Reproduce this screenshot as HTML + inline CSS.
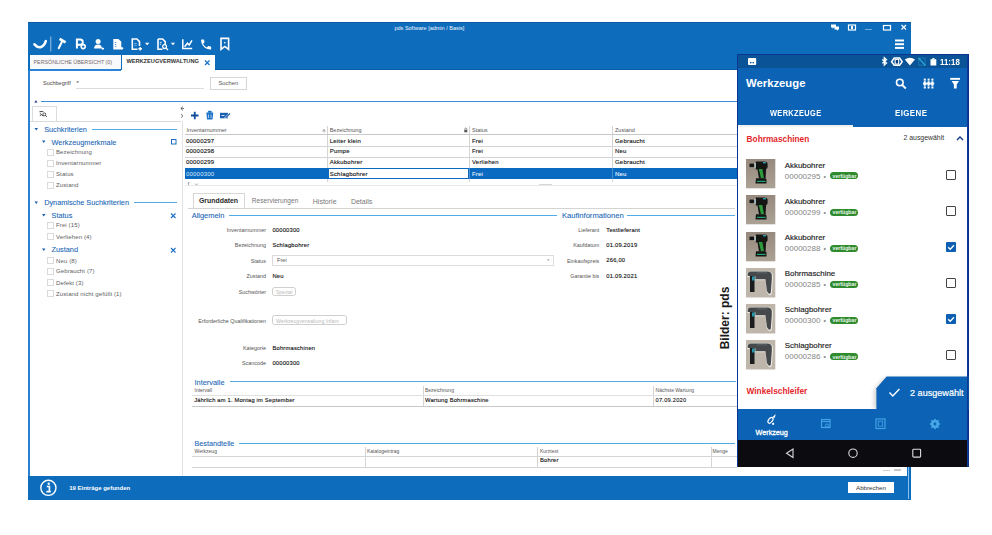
<!DOCTYPE html>
<html><head><meta charset="utf-8">
<style>
*{margin:0;padding:0;box-sizing:border-box}
html,body{width:992px;height:535px;overflow:hidden;background:#fff;font-family:"Liberation Sans",sans-serif;position:relative}
.a{position:absolute}
.t{position:absolute;white-space:nowrap;line-height:1}
.sec{position:absolute;color:#1766b6;line-height:1;white-space:nowrap;-webkit-text-stroke:0.08px #1766b6}
.lbl{position:absolute;color:#555;font-size:5.4px;line-height:1;white-space:nowrap;text-align:right}
.val{position:absolute;color:#111;font-size:5.8px;font-weight:normal;-webkit-text-stroke-width:0.12px;letter-spacing:0.2px;line-height:1;white-space:nowrap}
.hl{position:absolute;height:1px;background:#d4d4d4}
.vl{position:absolute;width:1px;background:#d4d4d4}
.bl{position:absolute;height:2px;background:#50abe6}
.cb{position:absolute;width:7px;height:7px;border:1px solid #dadada;background:#fff}
.si{position:absolute;color:#5e5e5e;font-size:6px;line-height:1;white-space:nowrap;letter-spacing:0.12px}
.th{position:absolute;color:#555;font-size:5.5px;line-height:1;white-space:nowrap}
.td{position:absolute;color:#111;font-size:6px;font-weight:normal;-webkit-text-stroke-width:0.12px;letter-spacing:0.2px;line-height:1;white-space:nowrap}
svg{position:absolute;overflow:visible}
</style></head><body>

<!-- ============ DESKTOP WINDOW ============ -->
<div class="a" style="left:28px;top:22px;width:883px;height:477.6px;background:#fff;border-left:2px solid #2a80d2;border-right:4.7px solid #0d6cbc"></div>

<div class="a" style="left:28px;top:22px;width:883px;height:48px;background:#0d6cbc;border-top:1px solid #0a5aa6"></div>
<div class="t" style="left:394.5px;top:25.6px;font-size:5.5px;color:#f4f8fc">pds Software [admin / Basis]</div>

<!-- window controls -->
<svg style="left:0;top:0" width="992" height="60" viewBox="0 0 992 60">
 <g fill="none" stroke="#fff" stroke-width="1.2">
  <rect x="848.5" y="25" width="7" height="5"/>
  <rect x="883.5" y="25.5" width="7" height="4.5"/>
  <path d="M901.5 25 L906 29.5 M906 25 L901.5 29.5"/>
 </g>
 <path d="M831 24.5h5v3h-2l-1.5 1.2v-1.2h-1.5z M834.5 26.5h4.5v3h-1.2v1.2l-1.5-1.2h-1.8z" fill="#fff"/>
 <rect x="851" y="26" width="2" height="3" fill="#fff"/>
 <rect x="865" y="29" width="7" height="0.8" fill="#8fbce6"/>
 <!-- hamburger -->
 <rect x="895" y="39.5" width="9" height="2" fill="#fff"/>
 <rect x="895" y="43.2" width="9" height="2" fill="#fff"/>
 <rect x="895" y="46.9" width="9" height="2" fill="#fff"/>
</svg>

<!-- toolbar icons -->
<svg style="left:0;top:0" width="240" height="60" viewBox="0 0 240 60">
 <!-- swoosh -->
 <path d="M34.5 44.3 Q37.5 47.8 40.5 47.2 Q44.2 46.2 45.8 41.2" fill="none" stroke="#fff" stroke-width="2.6" stroke-linecap="round"/>
 <rect x="50.3" y="36.5" width="1" height="15" fill="#9cc4ea"/>
 <!-- hammer -->
 <path d="M58.7 48.2 L62.2 41.2" fill="none" stroke="#fff" stroke-width="2" stroke-linecap="round"/>
 <path d="M59.6 38.9 L65.6 42.4" fill="none" stroke="#fff" stroke-width="2.6" stroke-linecap="butt"/>
 <!-- P with gear -->
 <path d="M76.9 48.4 V39.6 h3.3 a2.6 2.6 0 0 1 0 5.2 h-2.4" fill="none" stroke="#fff" stroke-width="2"/>
 <rect x="78.4" y="41" width="0.9" height="0.9" fill="#0d6cbc"/>
 <circle cx="83.2" cy="46.6" r="2" fill="none" stroke="#fff" stroke-width="1.6"/>
 <!-- person plus -->
 <circle cx="98.1" cy="41.6" r="2.5" fill="#fff"/>
 <path d="M94 48.4 q0.3-3.8 4.1-3.8 q3.6 0 3.9 3.8z" fill="#fff"/>
 <path d="M101.6 48.6h2.4 M102.8 47.4v2.4" stroke="#fff" stroke-width="1.1"/>
 <!-- doc -->
 <path d="M113.3 39h5.2l2.8 2.8v7.6h-8z" fill="#fff"/>
 <path d="M114.8 42.5h1.5 M114.8 44.5h1.5 M114.8 46.5h1.5" stroke="#4a8ad0" stroke-width="0.9"/>
 <path d="M120.5 48.3h2.8 M121.9 46.9v2.8" stroke="#fff" stroke-width="1.3"/>
 <!-- doc plus dropdown -->
 <path d="M137.5 49.3h-5.2v-10.3h4.6l2.6 2.6v4.3" fill="none" stroke="#fff" stroke-width="1.6"/>
 <path d="M134.3 43.5h2.5 M134.3 45.3h2.5" stroke="#8bb9e6" stroke-width="0.9"/>
 <path d="M138.4 48.8h3.6 M140.2 47v3.6" stroke="#fff" stroke-width="1.4"/>
 <path d="M145 42.8h4.3l-2.15 2.4z" fill="#fff"/>
 <!-- doc search dropdown -->
 <path d="M158 39h4.6l2.6 2.6v4 M162.5 49.3h-4.5v-10.3" fill="none" stroke="#fff" stroke-width="1.6"/>
 <path d="M159.8 42.3h1.8 M159.8 44.2h1.5" stroke="#fff" stroke-width="0.9"/>
 <circle cx="164.6" cy="46.6" r="1.9" fill="#0d6cbc" stroke="#fff" stroke-width="1.3"/>
 <path d="M166 48l2 2" stroke="#fff" stroke-width="1.5"/>
 <path d="M170.8 42.8h4.3l-2.15 2.4z" fill="#fff"/>
 <!-- chart -->
 <path d="M182.8 39.2v9.3h9.4" fill="none" stroke="#fff" stroke-width="1.5"/>
 <path d="M184.6 46.8 l2.8-3.6 l1.8 1.8 l2.8-4.6" fill="none" stroke="#fff" stroke-width="1.5"/>
 <!-- phone -->
 <path transform="translate(199.4 37.7) scale(0.56)" d="M6.62 10.79c1.44 2.83 3.76 5.14 6.59 6.590l2.2-2.2c.27-.27.67-.36 1.02-.24 1.12.37 2.33.57 3.57.57.55 0 1 .45 1 1V20c0 .55-.45 1-1 1-9.390 0-17-7.61-17-17 0-.55.45-1 1-1h3.5c.55 0 1 .45 1 1 0 1.25.2 2.45.57 3.57.11.35.03.74-.25 1.02l-2.2 2.2z" fill="#fff"/>
 <!-- bookmark -->
 <path d="M221 38.4h7.6v11l-3.8-3l-3.8 3z" fill="none" stroke="#fff" stroke-width="1.6"/>
 <path d="M224.8 41.8 l1 1 l-1 1 l-1-1z" fill="#fff"/>
</svg>

<!-- tabs -->
<div class="a" style="left:215px;top:69px;width:696px;height:1px;background:#0a5aa6"></div>
<div class="a" style="left:30px;top:55px;width:91px;height:16px;background:#f7f9fc;border-bottom:2px solid #2a83d6"></div>
<div class="t" style="left:33.5px;top:59.5px;font-size:5.35px;color:#7a6a6a">PERSÖNLICHE ÜBERSICHT (0)</div>
<div class="a" style="left:122px;top:55px;width:93px;height:15px;background:#fff"></div>
<div class="t" style="left:126.4px;top:59.3px;font-size:5.65px;font-weight:bold;color:#333">WERKZEUGVERWALTUNG</div>
<svg style="left:0;top:0" width="230" height="80"><path d="M205 60.5 l4.5 4.5 M209.5 60.5 l-4.5 4.5" stroke="#1f78c8" stroke-width="1.4"/></svg>

<!-- search row -->
<div class="t" style="left:43px;top:80.5px;font-size:5.5px;color:#4a4444">Suchbegriff</div>
<div class="t" style="left:76.5px;top:79.5px;font-size:6px;color:#333">*</div>
<div class="hl" style="left:76px;top:88px;width:128px;background:#dcdcdc"></div>
<div class="a" style="left:210px;top:77px;width:36.5px;height:12.5px;border:1px solid #d6d6d6;background:#fff"></div>
<div class="t" style="left:218.5px;top:80.5px;font-size:5.8px;color:#555">Suchen</div>

<!-- separator -->
<div class="bl" style="left:41px;top:100.5px;width:868px;height:1.6px;background:#3f90dc"></div>
<svg style="left:0;top:0" width="60" height="110"><path d="M34.3 102.6 h3.2 l-1.6 -2.4z" fill="#0f2f80"/></svg>

<!-- ============ SIDEBAR ============ -->
<div class="a" style="left:32px;top:106px;width:25px;height:16px;border:1px solid #dcdcdc;border-bottom:none;background:#fff"></div>
<div class="hl" style="left:30px;top:121px;width:151px;background:#dadada"></div>
<svg style="left:0;top:0" width="200" height="130">
 <path d="M39.5 111.6 h3.8 M39.8 113.3 l3.5 2.8" stroke="#333" stroke-width="0.9" fill="none"/>
 <circle cx="40.3" cy="115.5" r="0.6" fill="#444"/>
 <circle cx="44.3" cy="114.3" r="1.4" fill="none" stroke="#333" stroke-width="0.8"/>
 <path d="M45.3 115.3 l1.5 1.5" stroke="#333" stroke-width="1"/>
 <path d="M183 106.5 l-2.2 2 l2.2 2 M181 108.5 h3" stroke="#666" stroke-width="0.9" fill="none"/>
 <path d="M181 114 l2 1.8 l-2 1.8" stroke="#666" stroke-width="0.9" fill="none"/>
</svg>

<!-- Suchkriterien -->
<svg style="left:0;top:0" width="200" height="300">
 <g fill="#1b5fae">
  <path d="M34.5 128 h3.5 l-1.75 2.5z"/>
  <path d="M42 140.5 h3.5 l-1.75 2.5z"/>
  <path d="M34.5 201.5 h3.5 l-1.75 2.5z"/>
  <path d="M42 214 h3.5 l-1.75 2.5z"/>
  <path d="M42 248.5 h3.5 l-1.75 2.5z"/>
 </g>
 <rect x="171.5" y="139.5" width="4.5" height="4.5" fill="none" stroke="#1b6fc2" stroke-width="1"/>
 <path d="M171 213.5 l4.5 4.5 M175.5 213.5 l-4.5 4.5 M171 248 l4.5 4.5 M175.5 248 l-4.5 4.5" stroke="#1b6fc2" stroke-width="1.1"/>
</svg>
<div class="sec" style="left:44.2px;top:125.8px;font-size:7.3px">Suchkriterien</div>
<div class="bl" style="left:92px;top:128.8px;width:85px;height:1.2px"></div>
<div class="sec" style="left:51.6px;top:138.5px;font-size:7.3px">Werkzeugmerkmale</div>
<div class="cb" style="left:47px;top:149px"></div><div class="si" style="left:56px;top:149.2px">Bezeichnung</div>
<div class="cb" style="left:47px;top:160px"></div><div class="si" style="left:56px;top:160.2px">Inventarnummer</div>
<div class="cb" style="left:47px;top:171px"></div><div class="si" style="left:56px;top:171.2px">Status</div>
<div class="cb" style="left:47px;top:182px"></div><div class="si" style="left:56px;top:182.2px">Zustand</div>

<div class="sec" style="left:44.2px;top:199px;font-size:7.3px">Dynamische Suchkriterien</div>
<div class="bl" style="left:133.5px;top:202.3px;width:43.5px;height:1.2px"></div>
<div class="sec" style="left:51.6px;top:211.8px;font-size:7.3px">Status</div>
<div class="cb" style="left:47px;top:222px"></div><div class="si" style="left:56px;top:222.3px">Frei (15)</div>
<div class="cb" style="left:47px;top:233px"></div><div class="si" style="left:56px;top:233.5px">Verliehen (4)</div>
<div class="sec" style="left:51.6px;top:246.3px;font-size:7.3px">Zustand</div>
<div class="cb" style="left:47px;top:257px"></div><div class="si" style="left:56px;top:257.5px">Neu (8)</div>
<div class="cb" style="left:47px;top:268px"></div><div class="si" style="left:56px;top:268.3px">Gebraucht (7)</div>
<div class="cb" style="left:47px;top:279px"></div><div class="si" style="left:56px;top:279.5px">Defekt (3)</div>
<div class="cb" style="left:47px;top:290px"></div><div class="si" style="left:56px;top:290.7px">Zustand nicht gefüllt (1)</div>

<!-- splitter -->
<div class="a" style="left:182px;top:121px;width:1px;height:355px;background:#e2e2e2"></div>

<!-- ============ MAIN ============ -->
<svg style="left:0;top:0" width="240" height="130">
 <path d="M191 115.5 h7.5 M194.75 111.8 v7.5" stroke="#0f4c9a" stroke-width="1.8"/>
 <path d="M206.3 112.5 h7 l-0.8 7 h-5.4z" fill="#1d74c9"/>
 <rect x="207.8" y="110.8" width="4" height="2" rx="1" fill="#1d74c9"/>
 <path d="M208.5 114.5 v3.5 M211 114.5 v3.5" stroke="#fff" stroke-width="0.6"/>
 <rect x="220" y="112.8" width="8" height="5.5" fill="#1a5fb0"/>
 <path d="M221.5 115.5 h3" stroke="#fff" stroke-width="0.8"/>
 <path d="M225 118.5 l5-5" stroke="#fff" stroke-width="2"/>
 <path d="M225.5 118 l4.5-4.5" stroke="#1a5fb0" stroke-width="1.1"/>
</svg>

<!-- table -->
<div class="th" style="left:186.6px;top:128.3px">Inventarnummer</div>
<div class="th" style="left:329.7px;top:128.3px">Bezeichnung</div>
<div class="th" style="left:472px;top:128.3px">Status</div>
<div class="th" style="left:615px;top:128.3px">Zustand</div>
<div class="vl" style="left:327px;top:126px;height:56px"></div>
<div class="vl" style="left:469px;top:126px;height:56px"></div>
<div class="vl" style="left:612px;top:126px;height:56px"></div>
<div class="a" style="left:539px;top:183.6px;width:13px;height:1.2px;background:#d8d8d8"></div>
<svg style="left:0;top:0" width="480" height="140">
 <path d="M322.5 131.5 l1.5-2 l1.5 2 M324 129.5 v3" stroke="#777" stroke-width="0.6" fill="none"/>
 <rect x="464.3" y="129.8" width="3" height="2.5" fill="#555"/>
 <path d="M464.8 129.8 v-0.8 a1 1 0 0 1 2 0 v0.8" stroke="#555" stroke-width="0.6" fill="none"/>
</svg>
<div class="hl" style="left:185px;top:134px;width:552px;background:#c8c8c8"></div>
<div class="hl" style="left:185px;top:146px;width:552px"></div>
<div class="hl" style="left:185px;top:157px;width:552px"></div>
<div class="hl" style="left:185px;top:167.5px;width:552px"></div>

<div class="td" style="left:186px;top:137.6px">00000297</div>
<div class="td" style="left:329.7px;top:137.6px">Leiter klein</div>
<div class="td" style="left:472px;top:137.6px">Frei</div>
<div class="td" style="left:615px;top:137.6px">Gebraucht</div>
<div class="td" style="left:186px;top:148.3px">00000298</div>
<div class="td" style="left:329.7px;top:148.3px">Pumpe</div>
<div class="td" style="left:472px;top:148.3px">Frei</div>
<div class="td" style="left:615px;top:148.3px">Neu</div>
<div class="td" style="left:186px;top:159.3px">00000299</div>
<div class="td" style="left:329.7px;top:159.3px">Akkubohrer</div>
<div class="td" style="left:472px;top:159.3px">Verliehen</div>
<div class="td" style="left:615px;top:159.3px">Gebraucht</div>

<div class="a" style="left:185px;top:168px;width:552px;height:10.8px;background:#0a6ac2"></div>
<div class="a" style="left:327.5px;top:168px;width:141px;height:10.8px;background:#fff;border:1px solid #0a6ac2"></div>
<div class="vl" style="left:469px;top:168px;height:10.8px;background:#4a8fd0"></div>
<div class="vl" style="left:612px;top:168px;height:10.8px;background:#4a8fd0"></div>
<div class="td" style="left:186px;top:170.8px;color:#dbe8f7;-webkit-text-stroke-width:0">00000300</div>
<div class="td" style="left:329.7px;top:170.8px">Schlagbohrer</div>
<div class="td" style="left:472px;top:170.8px;color:#e6eef8">Frei</div>
<div class="td" style="left:615px;top:170.8px;color:#e6eef8">Neu</div>

<div class="hl" style="left:185px;top:184.5px;width:552px;background:#e8e8e8"></div>
<svg style="left:0;top:0" width="210" height="190">
 <path d="M188.5 185 v-2.5 M187.5 183.3 l1-1 l1 1" stroke="#777" stroke-width="0.6" fill="none"/>
 <path d="M195 183.5 l1.5 1.5 l1.5 -1.5" stroke="#777" stroke-width="0.6" fill="none"/>
</svg>

<!-- detail tabs -->
<div class="hl" style="left:188px;top:207.5px;width:547px;background:#d4d4d4"></div>
<div class="a" style="left:192.7px;top:193px;width:52px;height:15px;background:#fff;border:1px solid #d8d8d8;border-bottom:none"></div>
<div class="t" style="left:199px;top:197.6px;font-size:6.9px;font-weight:bold;color:#2a2a2a">Grunddaten</div>
<div class="t" style="left:251.8px;top:197.6px;font-size:6.6px;color:#777">Reservierungen</div>
<div class="t" style="left:312.8px;top:197.6px;font-size:7px;color:#777">Historie</div>
<div class="t" style="left:350.9px;top:197.6px;font-size:7px;color:#777">Details</div>

<!-- Allgemein -->
<div class="sec" style="left:191.7px;top:212.2px;font-size:7.45px">Allgemein</div>
<div class="bl" style="left:229px;top:214.8px;width:328px;height:1.2px"></div>
<div class="sec" style="left:562px;top:211.8px;font-size:7.6px">Kaufinformationen</div>
<div class="bl" style="left:627px;top:214.8px;width:108px;height:1.2px"></div>

<div class="lbl" style="left:200px;width:66px;top:228.3px">Inventarnummer</div><div class="val" style="left:272.4px;top:228.0px">00000300</div>
<div class="lbl" style="left:200px;width:66px;top:243.3px">Bezeichnung</div><div class="val" style="left:272.4px;top:243.0px">Schlagbohrer</div>
<div class="lbl" style="left:200px;width:66px;top:258.6px">Status</div>
<div class="a" style="left:272px;top:255px;width:281.5px;height:10.5px;border:1px solid #dcdcdc;background:#fff"></div>
<div class="t" style="left:277px;top:258.3px;font-size:5.6px;color:#555">Frei</div>
<svg style="left:0;top:0" width="560" height="270"><path d="M547 259.5 h2.5 l-1.25 1.3z" fill="#777"/></svg>
<div class="lbl" style="left:200px;width:66px;top:274.3px">Zustand</div><div class="val" style="left:272.4px;top:274.0px">Neu</div>
<div class="lbl" style="left:200px;width:66px;top:289.7px">Suchwörter</div>
<div class="a" style="left:272px;top:287px;width:24px;height:9px;border:1px solid #cfcfcf;border-radius:2.5px"></div>
<div class="t" style="left:276px;top:290.2px;font-size:5px;color:#bbb">Spezial</div>

<div class="lbl" style="left:190px;width:76px;top:318.6px">Erforderliche Qualifikationen</div>
<div class="a" style="left:272px;top:315.3px;width:74.5px;height:9.5px;border:1px solid #cfcfcf;border-radius:2.5px"></div>
<div class="t" style="left:276px;top:318.5px;font-size:5.2px;color:#bbb">Werkzeugverwaltung Infam</div>

<div class="lbl" style="left:200px;width:66px;top:346.3px">Kategorie</div><div class="val" style="left:272.4px;top:346.0px">Bohrmaschinen</div>
<div class="lbl" style="left:200px;width:66px;top:361.3px">Scancode</div><div class="val" style="left:272.4px;top:361.0px">00000300</div>

<div class="lbl" style="left:540px;width:59.3px;top:228.3px">Lieferant</div><div class="val" style="left:606.3px;top:228.0px">Testlieferant</div>
<div class="lbl" style="left:540px;width:59.3px;top:243.3px">Kaufdatum</div><div class="val" style="left:606.3px;top:243.0px">01.09.2019</div>
<div class="lbl" style="left:540px;width:59.3px;top:258.6px">Einkaufspreis</div><div class="val" style="left:606.3px;top:258.3px">266,00</div>
<div class="lbl" style="left:540px;width:59.3px;top:274.3px">Garantie bis</div><div class="val" style="left:606.3px;top:274.0px">01.09.2021</div>

<!-- Intervalle -->
<div class="sec" style="left:194.5px;top:378.8px;font-size:7.4px">Intervalle</div>
<div class="bl" style="left:229.5px;top:381.3px;width:506px;height:1.2px"></div>
<div class="th" style="left:194.5px;top:388px;font-size:5px">Intervall</div>
<div class="th" style="left:425px;top:388px;font-size:5px">Bezeichnung</div>
<div class="th" style="left:655.6px;top:388px;font-size:5px">Nächste Wartung</div>
<div class="vl" style="left:422.5px;top:386px;height:20px"></div>
<div class="vl" style="left:652.5px;top:386px;height:20px"></div>
<div class="hl" style="left:192px;top:394.6px;width:545px;background:#e0e0e0"></div>
<div class="hl" style="left:192px;top:406px;width:545px;background:#c8c8c8"></div>
<div class="td" style="left:194.2px;top:397.5px;font-size:5.74px">Jährlich am 1. Montag im September</div>
<div class="td" style="left:425px;top:397.5px;font-size:5.74px">Wartung Bohrmaschine</div>
<div class="td" style="left:655.6px;top:397.5px;font-size:5.74px;color:#222">07.09.2020</div>

<!-- Bestandteile -->
<div class="sec" style="left:194.5px;top:439.8px;font-size:7.25px">Bestandteile</div>
<div class="bl" style="left:239px;top:442.5px;width:496px;height:1.2px"></div>
<div class="th" style="left:194.5px;top:449px;font-size:5px">Werkzeug</div>
<div class="th" style="left:367px;top:449px;font-size:5px">Katalogeintrag</div>
<div class="th" style="left:540px;top:449px;font-size:5px">Kurztext</div>
<div class="th" style="left:712.5px;top:449px;font-size:5px">Menge</div>
<div class="vl" style="left:364.5px;top:447px;height:21px"></div>
<div class="vl" style="left:537px;top:447px;height:21px"></div>
<div class="vl" style="left:710.5px;top:447px;height:21px"></div>
<div class="hl" style="left:192px;top:456px;width:545px"></div>
<div class="hl" style="left:192px;top:467px;width:545px"></div>
<div class="td" style="left:540px;top:458.3px;font-size:5.8px">Bohrer</div>

<!-- status bar -->
<div class="a" style="left:883px;top:469.5px;width:7px;height:1px;background:#d0d0d0"></div>
<div class="a" style="left:894px;top:469px;width:6.5px;height:1.5px;background:#c8c8c8"></div>
<div class="a" style="left:28px;top:476px;width:883px;height:23.6px;background:#0d6cbc"></div>
<svg style="left:0;top:470px" width="80" height="30">
 <circle cx="48.4" cy="17.8" r="7.6" fill="none" stroke="#fff" stroke-width="1.4"/>
 <circle cx="48.7" cy="13.8" r="1.2" fill="#fff"/>
 <path d="M46.8 16.5 h2.6 v4.8 M46.4 21.6 h4.4" stroke="#fff" stroke-width="1.6" fill="none"/>
</svg>
<div class="t" style="left:69.2px;top:485px;font-size:6px;font-weight:bold;color:#fff">19 Einträge gefunden</div>
<div class="a" style="left:848px;top:482px;width:46px;height:11px;background:#fff"></div>
<div class="t" style="left:856px;top:484.6px;font-size:6.2px;color:#333">Abbrechen</div>

<div class="a" style="left:908px;top:70px;width:0.8px;height:429px;background:#8cc0ee"></div>
<!-- ============ PHONE ============ -->
<div class="a" style="left:736.5px;top:54px;width:232.3px;height:413px;background:#fff;border:1px solid #0b3590;border-right:1.8px solid #0b2f8a"></div>
<div class="a" style="left:737.5px;top:54.5px;width:230px;height:13px;background:#0a5396"></div>
<div class="a" style="left:737.5px;top:67.5px;width:230px;height:59.5px;background:#0c63b6"></div>
<div class="a" style="left:737.5px;top:125.2px;width:115.5px;height:1.8px;background:#f2f0ec"></div>
<svg style="left:0;top:0" width="992" height="130">
 <rect x="748" y="58" width="8.2" height="7" rx="1" fill="#fff"/>
 <rect x="750" y="62" width="1.5" height="1.3" fill="#0a5396"/>
 <rect x="752.5" y="62" width="1.5" height="1.3" fill="#0a5396"/>
 <!-- bluetooth -->
 <path d="M882.3 59.6 l4.2 3.4 l-2.2 2 v-7.2 l2.2 2 l-4.2 3.4" fill="none" stroke="#fff" stroke-width="1.3"/>
 <!-- hexagon vibrate -->
 <path d="M891.6 61.7 l2.6-3.6 h5.4 l2.6 3.6 l-2.6 3.6 h-5.4z" fill="none" stroke="#fff" stroke-width="1.5"/>
 <rect x="894.6" y="58.8" width="4.6" height="5.8" fill="#fff"/>
 <rect x="895.7" y="59.9" width="2.4" height="3.6" fill="#0a3a78"/>
 <!-- wifi -->
 <path d="M904.8 59.4 q5.1-3.2 10.2 0 l-5.1 6z" fill="#fff"/>
 <!-- no signal -->
 <path d="M918.8 58.2 h6.4 v7 h-6.4z" fill="none" stroke="#1f93c4" stroke-width="0.8" opacity="0.8"/>
 <path d="M918.5 58 l7 7.5" stroke="#2aa8d0" stroke-width="1.2"/>
 <!-- battery -->
 <rect x="930.5" y="59.2" width="5.8" height="6.3" fill="#fff"/>
 <rect x="932.4" y="58" width="2" height="1.3" fill="#fff"/>
 <!-- search -->
 <circle cx="899.8" cy="82.5" r="3.3" fill="none" stroke="#fff" stroke-width="1.6"/>
 <path d="M902.2 85 l3.6 3.5" stroke="#fff" stroke-width="1.8"/>
 <!-- grid / columns -->
 <g fill="#fff">
  <rect x="923.8" y="78.6" width="2" height="9.9"/>
  <rect x="927.6" y="78.6" width="2" height="9.9"/>
  <rect x="931.4" y="78.6" width="2" height="9.9"/>
  <rect x="923" y="82.6" width="11.2" height="1.9"/>
 </g>
 <path d="M923 80.9 h11.2 M923 86.2 h11.2" stroke="#0c63b6" stroke-width="0.6"/>
 <!-- filter -->
 <rect x="950.2" y="77.9" width="9.8" height="1.9" fill="#fff"/>
 <path d="M951.6 81 h7.4 l-2.3 3.4 v4.1 h-2.8 v-4.1z" fill="#fff"/>
</svg>
<div class="t" style="left:940.3px;top:57.6px;font-size:9.3px;font-weight:bold;color:#fff;transform:scaleX(0.85);transform-origin:0 0">11:18</div>
<div class="t" style="left:746px;top:78.3px;font-size:11.3px;font-weight:bold;color:#fff">Werkzeuge</div>
<div class="t" style="left:769.8px;top:109.4px;font-size:8.8px;font-weight:bold;color:#fff;letter-spacing:0.45px;transform:scaleX(0.84);transform-origin:0 0">WERKZEUGE</div>
<div class="t" style="left:894.8px;top:109.4px;font-size:8.8px;font-weight:bold;color:#fff;letter-spacing:0.45px;transform:scaleX(0.9);transform-origin:0 0">EIGENE</div>

<!-- list header -->
<div class="t" style="left:746.6px;top:134.6px;font-size:8.3px;font-weight:bold;color:#e3262b">Bohrmaschinen</div>
<div class="t" style="left:903.5px;top:134.8px;font-size:6.9px;color:#333">2 ausgewählt</div>
<svg style="left:0;top:0" width="992" height="150"><path d="M957 140 l3-3 l3 3" fill="none" stroke="#0d3588" stroke-width="1.4"/></svg>

<!-- ITEMS -->
<svg style="left:746.3px;top:159.30px" width="29.3" height="29.3" viewBox="0 0 29.3 29.3">
 <defs><linearGradient id="ga0" x1="0" y1="0" x2="0" y2="1"><stop offset="0" stop-color="#968a7f"/><stop offset="1" stop-color="#aca195"/></linearGradient></defs>
 <rect width="29.3" height="29.3" fill="url(#ga0)"/>
 <path d="M3.5 4.6 h5.5 v3.5 h-5.5z" fill="#151515"/>
 <rect x="8.3" y="4" width="1.6" height="4.6" fill="#cfe6ea"/>
 <path d="M9.8 2.4 h9 q2.8 0 2.8 2.8 v2.8 q0 1.5 -1.5 2 l-0.5 9.5 h-6.6 l-1.5-9 h-1.7z" fill="#141614"/>
 <path d="M17 3 h3 v1.4 h-3z" fill="#2aa0b0"/>
 <path d="M12.8 10 h3.6 l1.5 9 h-3z" fill="#2e9a3c"/>
 <path d="M10 19.3 h9 q1.5 0 1.5 1.5 v3.7 h-11z" fill="#121a14"/>
 <path d="M11 21.8 h8.5 v1.2 h-8.5z" fill="#26a07a"/>
</svg>
<div class="t" style="left:784.8px;top:161.60px;font-size:7.9px;color:#222;-webkit-text-stroke:0.15px #222">Akkubohrer</div>
<div class="t" style="left:784.8px;top:172.60px;font-size:8px;color:#858585">00000295</div>
<div class="t" style="left:823.5px;top:172.60px;font-size:7px;color:#888">•</div>
<div class="a" style="left:829.9px;top:172.40px;width:28.3px;height:7px;background:#2e8b2e;border-radius:3.5px"></div>
<div class="t" style="left:832.5px;top:173.80px;font-size:5.2px;font-weight:bold;color:#e8f4e8">verfügbar</div>
<div class="a" style="left:946px;top:169.60px;width:10px;height:10px;border:1.3px solid #444;border-radius:1px"></div>
<svg style="left:746.3px;top:195.45px" width="29.3" height="29.3" viewBox="0 0 29.3 29.3">
 <defs><linearGradient id="ga1" x1="0" y1="0" x2="0" y2="1"><stop offset="0" stop-color="#968a7f"/><stop offset="1" stop-color="#aca195"/></linearGradient></defs>
 <rect width="29.3" height="29.3" fill="url(#ga1)"/>
 <path d="M3.5 4.6 h5.5 v3.5 h-5.5z" fill="#151515"/>
 <rect x="8.3" y="4" width="1.6" height="4.6" fill="#cfe6ea"/>
 <path d="M9.8 2.4 h9 q2.8 0 2.8 2.8 v2.8 q0 1.5 -1.5 2 l-0.5 9.5 h-6.6 l-1.5-9 h-1.7z" fill="#141614"/>
 <path d="M17 3 h3 v1.4 h-3z" fill="#2aa0b0"/>
 <path d="M12.8 10 h3.6 l1.5 9 h-3z" fill="#2e9a3c"/>
 <path d="M10 19.3 h9 q1.5 0 1.5 1.5 v3.7 h-11z" fill="#121a14"/>
 <path d="M11 21.8 h8.5 v1.2 h-8.5z" fill="#26a07a"/>
</svg>
<div class="t" style="left:784.8px;top:197.75px;font-size:7.9px;color:#222;-webkit-text-stroke:0.15px #222">Akkubohrer</div>
<div class="t" style="left:784.8px;top:208.75px;font-size:8px;color:#858585">00000299</div>
<div class="t" style="left:823.5px;top:208.75px;font-size:7px;color:#888">•</div>
<div class="a" style="left:829.9px;top:208.55px;width:28.3px;height:7px;background:#2e8b2e;border-radius:3.5px"></div>
<div class="t" style="left:832.5px;top:209.95px;font-size:5.2px;font-weight:bold;color:#e8f4e8">verfügbar</div>
<div class="a" style="left:946px;top:205.75px;width:10px;height:10px;border:1.3px solid #444;border-radius:1px"></div>
<svg style="left:746.3px;top:231.60px" width="29.3" height="29.3" viewBox="0 0 29.3 29.3">
 <defs><linearGradient id="ga2" x1="0" y1="0" x2="0" y2="1"><stop offset="0" stop-color="#968a7f"/><stop offset="1" stop-color="#aca195"/></linearGradient></defs>
 <rect width="29.3" height="29.3" fill="url(#ga2)"/>
 <path d="M3.5 4.6 h5.5 v3.5 h-5.5z" fill="#151515"/>
 <rect x="8.3" y="4" width="1.6" height="4.6" fill="#cfe6ea"/>
 <path d="M9.8 2.4 h9 q2.8 0 2.8 2.8 v2.8 q0 1.5 -1.5 2 l-0.5 9.5 h-6.6 l-1.5-9 h-1.7z" fill="#141614"/>
 <path d="M17 3 h3 v1.4 h-3z" fill="#2aa0b0"/>
 <path d="M12.8 10 h3.6 l1.5 9 h-3z" fill="#2e9a3c"/>
 <path d="M10 19.3 h9 q1.5 0 1.5 1.5 v3.7 h-11z" fill="#121a14"/>
 <path d="M11 21.8 h8.5 v1.2 h-8.5z" fill="#26a07a"/>
</svg>
<div class="t" style="left:784.8px;top:233.90px;font-size:7.9px;color:#222;-webkit-text-stroke:0.15px #222">Akkubohrer</div>
<div class="t" style="left:784.8px;top:244.90px;font-size:8px;color:#858585">00000288</div>
<div class="t" style="left:823.5px;top:244.90px;font-size:7px;color:#888">•</div>
<div class="a" style="left:829.9px;top:244.70px;width:28.3px;height:7px;background:#2e8b2e;border-radius:3.5px"></div>
<div class="t" style="left:832.5px;top:246.10px;font-size:5.2px;font-weight:bold;color:#e8f4e8">verfügbar</div>
<div class="a" style="left:946px;top:241.90px;width:10px;height:10px;background:#0c5fb3;border-radius:1px"></div>
<svg style="left:946px;top:241.90px" width="10" height="10"><path d="M2.2 5.2 l2 2 l3.8-4" fill="none" stroke="#fff" stroke-width="1.3"/></svg>
<svg style="left:746.3px;top:267.75px" width="29.3" height="29.5" viewBox="0 0 29.3 29.5">
 <rect width="29.3" height="29.5" fill="#beb6ab"/>
 <path d="M0.8 8 q0-4.5 4-4.8 h17 q4.5 0.3 5 4 v4 l-1 14 q-0.5 2.5-2.5 2 l-2.5-3 l-1.5-12 h-10 v-3 h-3.5 q-5 0-5-1.2z" fill="#f0ece6"/>
 <path d="M1.5 7.5 q0-3.8 3.5-4 h16.5 q4 0.3 4.3 3.5 v4 l-1 13.5 q-0.4 1.8-1.8 1.2 l-2-2.5 l-1.6-12 h-10 v-3 h-3 q-5 0-4.9-0.7z" fill="#45494c"/>
 <path d="M4 8 h4.5 v16 h-4.5z" fill="#1a1c1e"/>
 <path d="M6 8.5 h2.8 v4 h-2.8z" fill="#2b95a8"/>
 <path d="M11 4.3 h10 v1.2 h-10z" fill="#5a6064"/>
</svg>
<div class="t" style="left:784.8px;top:270.05px;font-size:7.9px;color:#222;-webkit-text-stroke:0.15px #222">Bohrmaschine</div>
<div class="t" style="left:784.8px;top:281.05px;font-size:8px;color:#858585">00000285</div>
<div class="t" style="left:823.5px;top:281.05px;font-size:7px;color:#888">•</div>
<div class="a" style="left:829.9px;top:280.85px;width:28.3px;height:7px;background:#2e8b2e;border-radius:3.5px"></div>
<div class="t" style="left:832.5px;top:282.25px;font-size:5.2px;font-weight:bold;color:#e8f4e8">verfügbar</div>
<div class="a" style="left:946px;top:278.05px;width:10px;height:10px;border:1.3px solid #444;border-radius:1px"></div>
<svg style="left:746.3px;top:303.90px" width="29.3" height="29.5" viewBox="0 0 29.3 29.5">
 <rect width="29.3" height="29.5" fill="#beb6ab"/>
 <path d="M0.8 8 q0-4.5 4-4.8 h17 q4.5 0.3 5 4 v4 l-1 14 q-0.5 2.5-2.5 2 l-2.5-3 l-1.5-12 h-10 v-3 h-3.5 q-5 0-5-1.2z" fill="#f0ece6"/>
 <path d="M1.5 7.5 q0-3.8 3.5-4 h16.5 q4 0.3 4.3 3.5 v4 l-1 13.5 q-0.4 1.8-1.8 1.2 l-2-2.5 l-1.6-12 h-10 v-3 h-3 q-5 0-4.9-0.7z" fill="#45494c"/>
 <path d="M4 8 h4.5 v16 h-4.5z" fill="#1a1c1e"/>
 <path d="M6 8.5 h2.8 v4 h-2.8z" fill="#2b95a8"/>
 <path d="M11 4.3 h10 v1.2 h-10z" fill="#5a6064"/>
</svg>
<div class="t" style="left:784.8px;top:306.20px;font-size:7.9px;color:#222;-webkit-text-stroke:0.15px #222">Schlagbohrer</div>
<div class="t" style="left:784.8px;top:317.20px;font-size:8px;color:#858585">00000300</div>
<div class="t" style="left:823.5px;top:317.20px;font-size:7px;color:#888">•</div>
<div class="a" style="left:829.9px;top:317.00px;width:28.3px;height:7px;background:#2e8b2e;border-radius:3.5px"></div>
<div class="t" style="left:832.5px;top:318.40px;font-size:5.2px;font-weight:bold;color:#e8f4e8">verfügbar</div>
<div class="a" style="left:946px;top:314.20px;width:10px;height:10px;background:#0c5fb3;border-radius:1px"></div>
<svg style="left:946px;top:314.20px" width="10" height="10"><path d="M2.2 5.2 l2 2 l3.8-4" fill="none" stroke="#fff" stroke-width="1.3"/></svg>
<svg style="left:746.3px;top:340.05px" width="29.3" height="29.5" viewBox="0 0 29.3 29.5">
 <rect width="29.3" height="29.5" fill="#beb6ab"/>
 <path d="M0.8 8 q0-4.5 4-4.8 h17 q4.5 0.3 5 4 v4 l-1 14 q-0.5 2.5-2.5 2 l-2.5-3 l-1.5-12 h-10 v-3 h-3.5 q-5 0-5-1.2z" fill="#f0ece6"/>
 <path d="M1.5 7.5 q0-3.8 3.5-4 h16.5 q4 0.3 4.3 3.5 v4 l-1 13.5 q-0.4 1.8-1.8 1.2 l-2-2.5 l-1.6-12 h-10 v-3 h-3 q-5 0-4.9-0.7z" fill="#45494c"/>
 <path d="M4 8 h4.5 v16 h-4.5z" fill="#1a1c1e"/>
 <path d="M6 8.5 h2.8 v4 h-2.8z" fill="#2b95a8"/>
 <path d="M11 4.3 h10 v1.2 h-10z" fill="#5a6064"/>
</svg>
<div class="t" style="left:784.8px;top:342.35px;font-size:7.9px;color:#222;-webkit-text-stroke:0.15px #222">Schlagbohrer</div>
<div class="t" style="left:784.8px;top:353.35px;font-size:8px;color:#858585">00000286</div>
<div class="t" style="left:823.5px;top:353.35px;font-size:7px;color:#888">•</div>
<div class="a" style="left:829.9px;top:353.15px;width:28.3px;height:7px;background:#2e8b2e;border-radius:3.5px"></div>
<div class="t" style="left:832.5px;top:354.55px;font-size:5.2px;font-weight:bold;color:#e8f4e8">verfügbar</div>
<div class="a" style="left:946px;top:350.35px;width:10px;height:10px;border:1.3px solid #444;border-radius:1px"></div>
<!-- Winkelschleifer + snackbar -->
<div class="t" style="left:746.5px;top:386.8px;font-size:8.3px;font-weight:bold;color:#e3262b">Winkelschleifer</div>
<svg style="left:0;top:0" width="992" height="470">
 <defs><filter id="sh" x="-20%" y="-20%" width="140%" height="140%"><feGaussianBlur stdDeviation="2"/></filter></defs>
 <path d="M884 378 h84 v31 h-94 v-19z" fill="#000" opacity="0.18" filter="url(#sh)"/>
 <path d="M886.6 376.6 h82 v33 h-92.2 v-21.3z" fill="#0c63b6"/>
 <path d="M889.5 392.5 l3.3 3.5 l6.6-7" fill="none" stroke="#fff" stroke-width="1.4"/>
</svg>
<div class="t" style="left:910px;top:388.8px;font-size:9.1px;color:#fff;-webkit-text-stroke:0.2px #fff">2 ausgewählt</div>
<!-- bottom nav -->
<div class="a" style="left:737.5px;top:408.5px;width:230px;height:31.5px;background:#0c63b6"></div>
<div class="a" style="left:737.5px;top:440px;width:230px;height:26.5px;background:#0b0b10"></div>
<svg style="left:0;top:0" width="992" height="470">
 <!-- werkzeug icon -->
 <ellipse cx="770.5" cy="420.3" rx="1.9" ry="3.3" transform="rotate(38 770.5 420.3)" fill="none" stroke="#fff" stroke-width="1.2"/>
 <path d="M772 417.5 l3.8-3.5 l-1 3.8z" fill="#fff"/>
 <path d="M771.8 423.6 l1.8-1.2 l0.8 1.8 l-1.6 1.1z" fill="#fff"/>
 <!-- calendar -->
 <rect x="821.5" y="419.5" width="8.5" height="8" fill="none" stroke="#47a6e6" stroke-width="1.1"/>
 <path d="M821.5 421.5 h8.5" stroke="#47a6e6" stroke-width="1.1"/>
 <circle cx="827" cy="425.5" r="1.6" fill="none" stroke="#47a6e6" stroke-width="0.9"/>
 <!-- tablet -->
 <rect x="876" y="419" width="9" height="9.5" fill="none" stroke="#47a6e6" stroke-width="1.1"/>
 <rect x="878.3" y="421.2" width="4.4" height="5" fill="none" stroke="#47a6e6" stroke-width="0.8"/>
 <!-- gear -->
 <circle cx="935" cy="424" r="3.2" fill="none" stroke="#47a6e6" stroke-width="2"/>
 <path d="M935 418.8 v10.4 M929.8 424 h10.4 M931.3 420.3 l7.4 7.4 M938.7 420.3 l-7.4 7.4" stroke="#47a6e6" stroke-width="1.4"/>
 <circle cx="935" cy="424" r="1.4" fill="#0c63b6"/>
 <!-- nav -->
 <path d="M793 449 v8.5 l-6.5-4.25z" fill="none" stroke="#ddd" stroke-width="1.1"/>
 <circle cx="853" cy="453.2" r="4.2" fill="none" stroke="#ddd" stroke-width="1.1"/>
 <rect x="912.8" y="449.3" width="7.8" height="7.8" fill="none" stroke="#ddd" stroke-width="1.1" rx="0.8"/>
</svg>
<div class="t" style="left:755.6px;top:429px;font-size:7.2px;color:#fff;-webkit-text-stroke:0.3px #fff">Werkzeug</div>
<div class="a" style="left:966.5px;top:54px;width:1.6px;height:413px;background:#0b3a98"></div>
<!-- Bilder: pds -->
<div class="t" style="left:694px;top:312.3px;font-size:12px;font-weight:bold;color:#1a1a1a;transform:rotate(-90deg);transform-origin:center">Bilder: pds</div>

</body></html>
